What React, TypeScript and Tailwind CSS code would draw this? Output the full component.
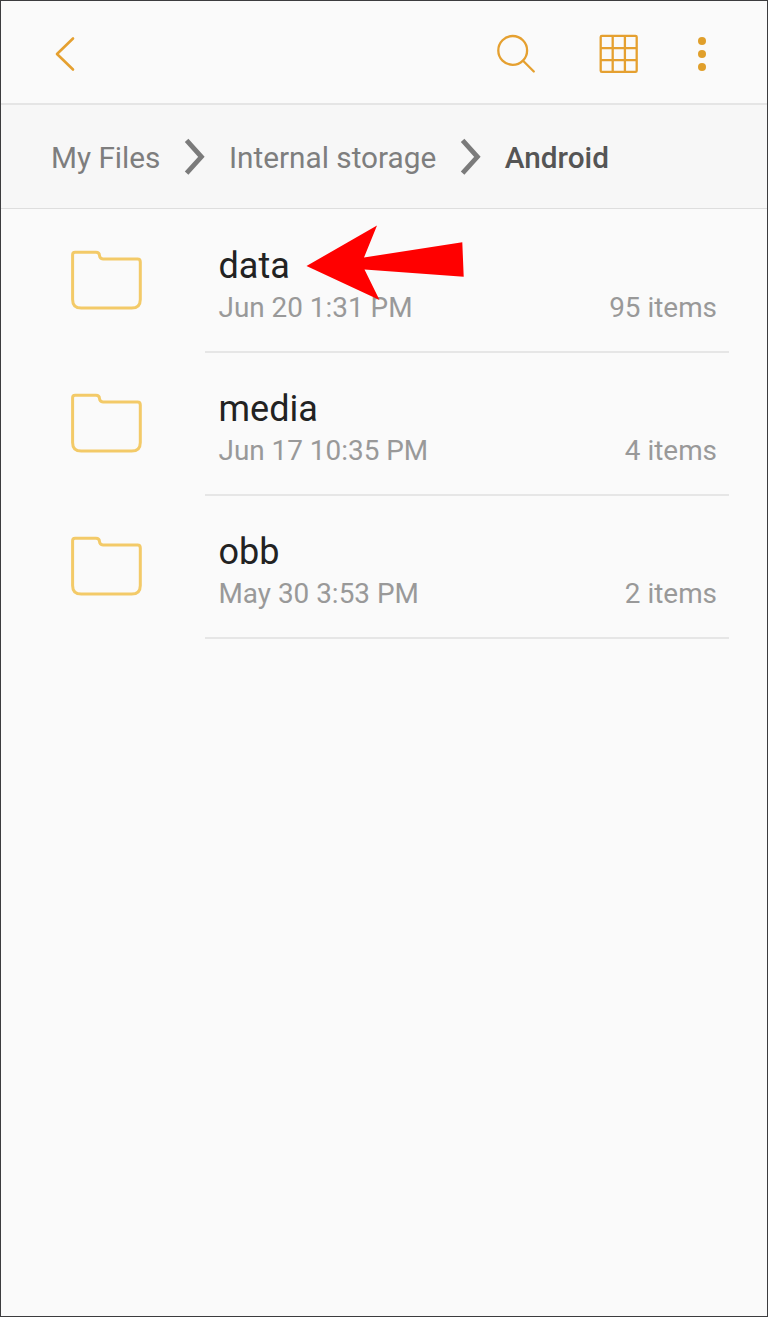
import { Fragment } from "react";

type Folder = {
  name: string;
  modified: string;
  items: string;
};

const folders: Folder[] = [
  { name: "data", modified: "Jun 20 1:31 PM", items: "95 items" },
  { name: "media", modified: "Jun 17 10:35 PM", items: "4 items" },
  { name: "obb", modified: "May 30 3:53 PM", items: "2 items" },
];

const parents = ["My Files", "Internal storage"];

function BackIcon() {
  return (
    <svg width="22" height="36" viewBox="0 0 22 36" fill="none" stroke="#e5a030" strokeWidth="2.6" strokeLinecap="round" strokeLinejoin="round">
      <path d="M19 2.5 3 18 19 33.5" />
    </svg>
  );
}

function SearchIcon() {
  return (
    <svg width="40" height="40" viewBox="0 0 40 40" fill="none" stroke="#e5a030" strokeWidth="2.3" strokeLinecap="round">
      <circle cx="16.7" cy="16.4" r="14.4" />
      <path d="m27.3 27 10.5 10.5" />
    </svg>
  );
}

function GridIcon() {
  return (
    <svg width="40" height="40" viewBox="0 0 40 40" fill="none" stroke="#e5a030" strokeWidth="2.3">
      <rect x="1.7" y="1.9" width="36" height="36" rx="1.2" />
      <path d="M13.7 2v36M25.9 2v36M2 14.2h36M2 26.2h36" />
    </svg>
  );
}

function MoreIcon() {
  return (
    <svg width="10" height="36" viewBox="0 0 10 36" fill="#e09f2b">
      <circle cx="5" cy="5" r="4" />
      <circle cx="5" cy="18" r="4" />
      <circle cx="5" cy="31" r="4" />
    </svg>
  );
}

function CrumbArrow() {
  return (
    <svg width="22" height="38" viewBox="0 0 22 38" fill="none" stroke="#7b7b7b" strokeWidth="4.8">
      <path d="M2.6 2.4 17.4 18.8 2.6 35.2" />
    </svg>
  );
}

function FolderIcon() {
  return (
    <svg width="72" height="60" viewBox="0 0 72 60" fill="none" stroke="#f3ca68" strokeWidth="3" strokeLinejoin="round">
      <path d="M5.1 2.3H26Q29.3 2.3 29.5 5.5T33.1 9.1H67.5Q70.3 9.1 70.3 11.9V49.4Q70.3 58.1 61.6 58.1H11.3Q2.6 58.1 2.6 49.4V4.8Q2.6 2.3 5.1 2.3Z" />
    </svg>
  );
}

function Pointer() {
  return (
    <svg className="absolute left-[304px] top-[15px]" width="160" height="78" viewBox="0 0 160 78" fill="#ff0000">
      <path d="M1.5 42 72 1.5 59 33.5 157.3 18.2 158.7 52.8 59.5 45.5 74.5 76Z" />
    </svg>
  );
}

function FolderRow({ folder }: { folder: Folder }) {
  return (
    <li className="flex h-[143px] pl-[69px] pr-[38px]">
      <div className="w-[135px] pt-10">
        <FolderIcon />
      </div>
      <div className="flex-1 border-b-2 border-[#e6e6e6] pl-[13.5px] pr-3 pt-[35px]">
        <div className="text-[36px] leading-[43px] text-[#222222]">{folder.name}</div>
        <div className="flex justify-between text-[27.9px] leading-[40px] text-[#999999]">
          <span>{folder.modified}</span>
          <span>{folder.items}</span>
        </div>
      </div>
    </li>
  );
}

export default function App() {
  return (
    <div className="h-[1317px] w-[768px] border border-[#3c3c3e] bg-[#fafafa] font-['Roboto',sans-serif]">
      <header className="flex h-[104px] items-center border-b-2 border-[#e5e5e5] pl-[53px] pr-[60px] pt-1">
        <BackIcon />
        <div className="ml-auto flex items-center">
          <SearchIcon />
          <div className="ml-[63px]">
            <GridIcon />
          </div>
          <div className="ml-[58px]">
            <MoreIcon />
          </div>
        </div>
      </header>

      <nav className="flex h-[104px] items-center border-b border-[#dedede] bg-[#f7f7f7] pl-[50px] text-[29.75px] text-[#7e7e7e]">
        {parents.map((name) => (
          <Fragment key={name}>
            <span className="pt-1">{name}</span>
            <span className="ml-6 mr-[22.5px]">
              <CrumbArrow />
            </span>
          </Fragment>
        ))}
        <span className="pt-1 font-medium text-[#555555]">Android</span>
      </nav>

      <main className="relative">
        <ul className="pt-px">
          {folders.map((folder) => (
            <FolderRow key={folder.name} folder={folder} />
          ))}
        </ul>
        <Pointer />
      </main>
    </div>
  );
}
